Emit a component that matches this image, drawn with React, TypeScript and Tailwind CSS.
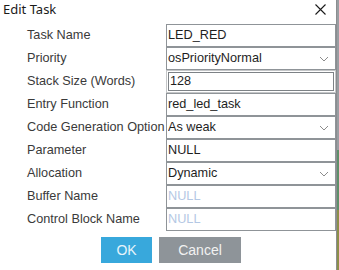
import React from "react";

type Row = {
  label: string;
  value: string;
  kind?: "text" | "select" | "number";
  placeholder?: boolean;
};

const rows: Row[] = [
  { label: "Task Name", value: "LED_RED" },
  { label: "Priority", value: "osPriorityNormal", kind: "select" },
  { label: "Stack Size (Words)", value: "128", kind: "number" },
  { label: "Entry Function", value: "red_led_task" },
  { label: "Code Generation Option", value: "As weak", kind: "select" },
  { label: "Parameter", value: "NULL" },
  { label: "Allocation", value: "Dynamic", kind: "select" },
  { label: "Buffer Name", value: "NULL", placeholder: true },
  { label: "Control Block Name", value: "NULL", placeholder: true },
];

function Chevron() {
  return (
    <svg width="10" height="6" viewBox="0 0 10 6" className="shrink-0">
      <path d="M1 1 L5 5 L9 1" fill="none" stroke="#8c8c8c" strokeWidth="1" />
    </svg>
  );
}

function Field({ row }: { row: Row }) {
  const textColor = row.placeholder ? "text-[#b4c8e4]" : "text-[#1e1e1e]";
  if (row.kind === "number") {
    return (
      <div className="h-[23px] border border-[#c4c6c8] p-[1px]">
        <div className={`h-full border border-[#7d8286] flex items-center pl-[1px] ${textColor}`}>
          {row.value}
        </div>
      </div>
    );
  }
  return (
    <div className={`h-[23px] border border-[#8f9498] flex items-center pl-[1px] pr-[6px] ${textColor}`}>
      <span className="flex-1 truncate">{row.value}</span>
      {row.kind === "select" && <Chevron />}
    </div>
  );
}

export default function App() {
  return (
    <div className="w-[339px] h-[270px] flex overflow-hidden" style={{ fontFamily: "'Liberation Sans', Arial, sans-serif" }}>
      <div className="w-[337px] h-full bg-white border-r border-[#8a8d90] flex flex-col">
        {/* Title bar */}
        <div className="h-[24px] flex items-start justify-between pl-[3px] pr-[10px]">
          <span className="text-[13px] leading-[18px] text-[#1a1a1a]" style={{ fontFamily: "'Noto Sans', sans-serif" }}>
            Edit Task
          </span>
          <svg width="11" height="11" viewBox="0 0 11 11" className="mt-[4px]">
            <path d="M0.5 0.5 L10.5 10.5 M10.5 0.5 L0.5 10.5" stroke="#1a1a1a" strokeWidth="1.1" />
          </svg>
        </div>

        {/* Form */}
        <div className="flex flex-col text-[12.7px]">
          {rows.map((row) => (
            <div key={row.label} className="flex h-[23px] items-center">
              <div className="w-[166px] pl-[27px] text-[#3a3a3a] whitespace-nowrap overflow-visible">
                {row.label}
              </div>
              <div className="w-[170px]">
                <Field row={row} />
              </div>
            </div>
          ))}
        </div>

        {/* Buttons */}
        <div className="flex mt-[6px] pl-[101px] gap-[7px]">
          <button className="w-[51px] h-[26px] bg-[#38a8dc] text-[#e6f4fb] text-[14px]">OK</button>
          <button className="w-[82px] h-[26px] bg-[#8e9499] text-[#f2f2f2] text-[14px]">Cancel</button>
        </div>
      </div>
      <div className="w-[2px] h-full flex flex-col">
        <div className="h-[150px] bg-[#9a9ea2]" />
        <div className="h-[60px] bg-[#5e8f6a]" />
        <div className="flex-1 bg-[#8c8f4a]" />
      </div>
    </div>
  );
}
